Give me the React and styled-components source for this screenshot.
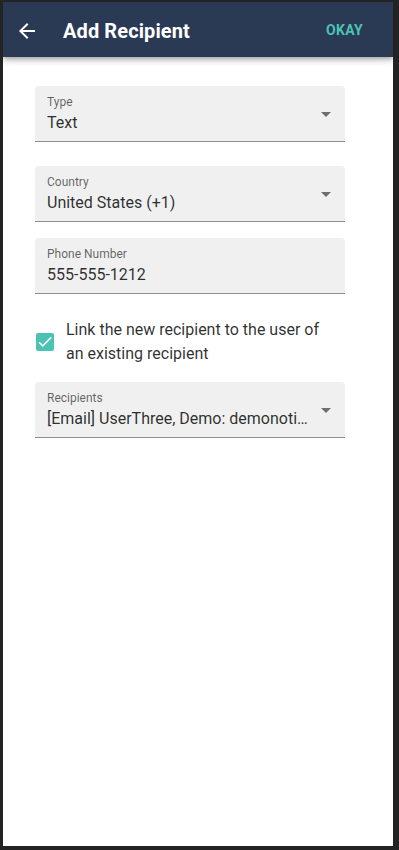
import React from "react";
import styled, { createGlobalStyle } from "styled-components";

const Global = createGlobalStyle`
  html, body { margin: 0; padding: 0; background: #232323; }
  body { font-family: Roboto, "Noto Sans", sans-serif; }
  * { box-sizing: border-box; }
`;

const Frame = styled.div`
  margin: 2px 6px 0 3px;
  height: 844px;
  background: #ffffff;
  display: flex;
  flex-direction: column;
  overflow: hidden;
`;

const AppBar = styled.header`
  height: 55px;
  flex: none;
  background: #2a3a55;
  display: flex;
  align-items: center;
  padding: 0 16px 0 12px;
  box-shadow: 0 2px 4px -1px rgba(0,0,0,0.2), 0 4px 5px 0 rgba(0,0,0,0.14), 0 1px 10px 0 rgba(0,0,0,0.12);
  position: relative;
  z-index: 1;
`;

const IconBtn = styled.button`
  width: 24px;
  height: 24px;
  padding: 0;
  border: 0;
  background: none;
  color: #fff;
  display: flex;
  margin-right: 24px;
  margin-top: 2px;
`;

const Title = styled.h1`
  margin: 0;
  flex: 1;
  color: #fff;
  font-size: 20px;
  font-weight: 700;
  letter-spacing: 0.1px;
  margin-top: 2px;
`;

const TextBtn = styled.button`
  border: 0;
  background: none;
  color: #4cc2b2;
  font-family: Roboto, sans-serif;
  font-weight: 700;
  font-size: 14px;
  letter-spacing: 0.3px;
  padding: 0;
  margin-right: 14px;
`;

const Content = styled.main`
  padding: 29px 48px 0 32px;
  display: flex;
  flex-direction: column;
`;

const Field = styled.div`
  position: relative;
  height: 56px;
  background: #f0f0f0;
  border-radius: 4px 4px 0 0;
  border-bottom: 1px solid #8c8c8c;
  margin-bottom: ${(p) => p.$mb}px;
  padding: 0 32px 0 12px;
`;

const Label = styled.div`
  position: absolute;
  left: 12px;
  top: 8px;
  font-size: 12px;
  color: rgba(0,0,0,0.6);
  line-height: 16px;
`;

const Value = styled.div`
  padding-top: 25px;
  font-size: 16px;
  line-height: 23px;
  color: rgba(0,0,0,0.82);
  white-space: nowrap;
  overflow: hidden;
  text-overflow: ellipsis;
`;

const Arrow = styled.svg`
  position: absolute;
  right: 7px;
  top: ${(p) => p.$top}px;
  width: 24px;
  height: 24px;
  fill: rgba(0,0,0,0.54);
`;

const CheckRow = styled.label`
  display: flex;
  align-items: center;
  margin: 0 0 16px 0;
  padding: 0;
`;

const Box = styled.span`
  width: 18px;
  height: 18px;
  border-radius: 2px;
  background: #4cc2b2;
  display: flex;
  align-items: center;
  justify-content: center;
  margin: 0 12px 0 1px;
  flex: none;
`;

const CheckText = styled.span`
  font-size: 16px;
  line-height: 24px;
  color: rgba(0,0,0,0.82);
  max-width: 266px;
`;

const DropArrow = ({ top }) => (
  <Arrow $top={top} viewBox="0 0 24 24"><path d="M7 10l5 5 5-5z" /></Arrow>
);

export default function App() {
  return (
    <>
      <Global />
      <Frame>
        <AppBar>
          <IconBtn aria-label="back">
            <svg viewBox="0 0 24 24" width="24" height="24" fill="#fff">
              <path d="M20 11H7.83l5.59-5.59L12 4l-8 8 8 8 1.41-1.41L7.83 13H20v-2z" />
            </svg>
          </IconBtn>
          <Title>Add Recipient</Title>
          <TextBtn>OKAY</TextBtn>
        </AppBar>
        <Content>
          <Field $mb={24}>
            <Label>Type</Label>
            <Value>Text</Value>
            <DropArrow top={16} />
          </Field>
          <Field $mb={16}>
            <Label>Country</Label>
            <Value>United States (+1)</Value>
            <DropArrow top={16} />
          </Field>
          <Field $mb={24}>
            <Label>Phone Number</Label>
            <Value>555-555-1212</Value>
          </Field>
          <CheckRow>
            <Box>
              <svg viewBox="0 0 24 24" width="18" height="18" fill="#fff">
                <path d="M9 16.17L4.83 12l-1.42 1.41L9 19 21 7l-1.41-1.41z" transform="translate(0 -0.5)" />
              </svg>
            </Box>
            <CheckText>Link the new recipient to the user of an existing recipient</CheckText>
          </CheckRow>
          <Field $mb={0}>
            <Label>Recipients</Label>
            <Value>[Email] UserThree, Demo: demonotifications@example.com</Value>
            <DropArrow top={16} />
          </Field>
        </Content>
      </Frame>
    </>
  );
}
